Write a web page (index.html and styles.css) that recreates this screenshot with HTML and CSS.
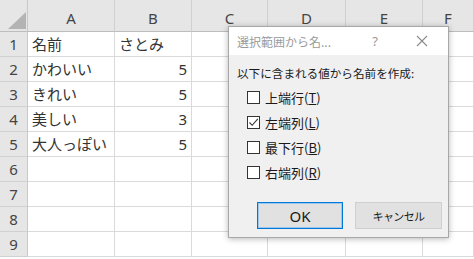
FILE: index.html
```html
<!DOCTYPE html>
<html lang="ja">
<head>
<meta charset="utf-8">
<link rel="stylesheet" href="styles.css">
</head>
<body>
<div class="app">
  <div class="sheet">
    <div class="corner"><span class="tri"></span></div>
    <div class="colhead">A</div>
    <div class="colhead">B</div>
    <div class="colhead">C</div>
    <div class="colhead">D</div>
    <div class="colhead">E</div>
    <div class="colhead">F</div>

    <div class="rowhead">1</div><div class="cell">名前</div><div class="cell">さとみ</div><div class="cell"></div><div class="cell"></div><div class="cell"></div><div class="cell"></div>
    <div class="rowhead">2</div><div class="cell">かわいい</div><div class="cell num">5</div><div class="cell"></div><div class="cell"></div><div class="cell"></div><div class="cell"></div>
    <div class="rowhead">3</div><div class="cell">きれい</div><div class="cell num">5</div><div class="cell"></div><div class="cell"></div><div class="cell"></div><div class="cell"></div>
    <div class="rowhead">4</div><div class="cell">美しい</div><div class="cell num">3</div><div class="cell"></div><div class="cell"></div><div class="cell"></div><div class="cell"></div>
    <div class="rowhead">5</div><div class="cell">大人っぽい</div><div class="cell num">5</div><div class="cell"></div><div class="cell"></div><div class="cell"></div><div class="cell"></div>
    <div class="rowhead">6</div><div class="cell"></div><div class="cell"></div><div class="cell"></div><div class="cell"></div><div class="cell"></div><div class="cell"></div>
    <div class="rowhead">7</div><div class="cell"></div><div class="cell"></div><div class="cell"></div><div class="cell"></div><div class="cell"></div><div class="cell"></div>
    <div class="rowhead">8</div><div class="cell"></div><div class="cell"></div><div class="cell"></div><div class="cell"></div><div class="cell"></div><div class="cell"></div>
    <div class="rowhead">9</div><div class="cell"></div><div class="cell"></div><div class="cell"></div><div class="cell"></div><div class="cell"></div><div class="cell"></div>
  </div>

  <div class="dialog">
    <div class="titlebar">
      <span class="title">選択範囲から名...</span>
      <span class="help">?</span>
      <span class="close">
        <svg width="12" height="12" viewBox="0 0 12 12"><path d="M1 1L11 11M11 1L1 11" stroke="#8a8a8a" stroke-width="1.1" fill="none"/></svg>
      </span>
    </div>
    <div class="body">
      <div class="label">以下に含まれる値から名前を作成:</div>
      <div class="options">
        <div class="opt"><span class="box"></span><span>上端行(<u>T</u>)</span></div>
        <div class="opt"><span class="box"><svg width="11" height="11" viewBox="0 0 11 11"><path d="M1.5 5.5L4.2 8.3L9.8 1.8" stroke="#333" stroke-width="1.1" fill="none"/></svg></span><span>左端列(<u>L</u>)</span></div>
        <div class="opt"><span class="box"></span><span>最下行(<u>B</u>)</span></div>
        <div class="opt"><span class="box"></span><span>右端列(<u>R</u>)</span></div>
      </div>
      <div class="buttons">
        <div class="btn btn-default">OK</div>
        <div class="btn btn-cancel">キャンセル</div>
      </div>
    </div>
  </div>
</div>
</body>
</html>
```
FILE: styles.css
```css
html, body {
  margin: 0;
  padding: 0;
  background: #ffffff;
}
.app {
  position: relative;
  width: 474px;
  height: 259px;
  overflow: hidden;
  font-family: "Noto Sans CJK JP", "Noto Sans", sans-serif;
}
.sheet {
  display: grid;
  grid-template-columns: 28px 87px 77px 76px 78px 77px 51px;
  grid-template-rows: 32px repeat(9, 25px);
}
.sheet > div {
  box-sizing: border-box;
  border-right: 1px solid #dadada;
  border-bottom: 1px solid #dadada;
}
.corner {
  position: relative;
  background: #e6e6e6;
  border-right-color: #c8c8c8 !important;
  border-bottom-color: #bdbdbd !important;
}
.tri {
  position: absolute;
  left: 8px;
  top: 12px;
  width: 18px;
  height: 17px;
  background: #b3b3b3;
  clip-path: polygon(100% 0, 100% 100%, 0 100%);
}
.colhead {
  background: #e6e6e6;
  border-right-color: #d0d0d0 !important;
  border-bottom-color: #bdbdbd !important;
  color: #444;
  font-family: "Noto Sans", sans-serif;
  font-size: 15px;
  display: flex;
  align-items: center;
  justify-content: center;
  padding-top: 4px;
}
.rowhead {
  background: #e6e6e6;
  border-right-color: #c8c8c8 !important;
  border-bottom-color: #d0d0d0 !important;
  color: #444;
  font-family: "Noto Sans", sans-serif;
  font-size: 15px;
  display: flex;
  align-items: center;
  justify-content: center;
}
.cell {
  font-size: 15px;
  color: #333;
  line-height: 24px;
  padding: 0 4px;
  white-space: nowrap;
  overflow: visible;
}
.cell.num {
  text-align: right;
  font-family: "Noto Sans", sans-serif;
}

/* dialog */
.dialog {
  position: absolute;
  left: 228px;
  top: 26px;
  width: 221px;
  height: 212px;
  box-sizing: border-box;
  border: 1px solid #a8a8a8;
  background: #f0f0f0;
  box-shadow: 0 1px 6px rgba(0, 0, 0, 0.28);
  display: flex;
  flex-direction: column;
}
.titlebar {
  height: 28px;
  background: #ffffff;
  display: flex;
  align-items: center;
  font-size: 12px;
  color: #9a9a9a;
  padding-left: 8px;
}
.title {
  flex: 1;
  letter-spacing: 0;
}
.help {
  width: 14px;
  text-align: center;
  margin-right: 34px;
  font-family: "Noto Sans", sans-serif;
  font-size: 13px;
  color: #999;
}
.close {
  width: 12px;
  height: 12px;
  margin-right: 20px;
  display: flex;
}
.body {
  flex: 1;
  display: flex;
  flex-direction: column;
  padding: 10px 0 0 8px;
}
.label {
  font-size: 11.6px;
  line-height: 16px;
  color: #1a1a1a;
}
.options {
  margin-top: 4px;
  padding-left: 10px;
  display: flex;
  flex-direction: column;
}
.opt {
  height: 25px;
  display: flex;
  align-items: center;
  font-size: 13px;
  color: #1a1a1a;
}
.box {
  width: 13px;
  height: 13px;
  box-sizing: border-box;
  border: 1px solid #333;
  background: #fff;
  margin-right: 5px;
  display: flex;
  align-items: center;
  justify-content: center;
}
.opt u {
  text-underline-offset: 1px;
}
.buttons {
  margin-top: 17px;
  padding-left: 20px;
  display: flex;
  gap: 12px;
}
.btn {
  width: 87px;
  height: 27px;
  box-sizing: border-box;
  background: #e1e1e1;
  border: 1px solid #cfcfcf;
  display: flex;
  align-items: center;
  justify-content: center;
  font-size: 12px;
  color: #1a1a1a;
}
.btn-cancel {
  font-size: 11px;
  letter-spacing: -0.6px;
}
.btn-default {
  width: 86px;
  border: 1px solid #0078d7;
  box-shadow: inset 0 0 0 1px #9cc6ec;
  font-family: "Noto Sans", sans-serif;
  font-size: 15px;
}
```
